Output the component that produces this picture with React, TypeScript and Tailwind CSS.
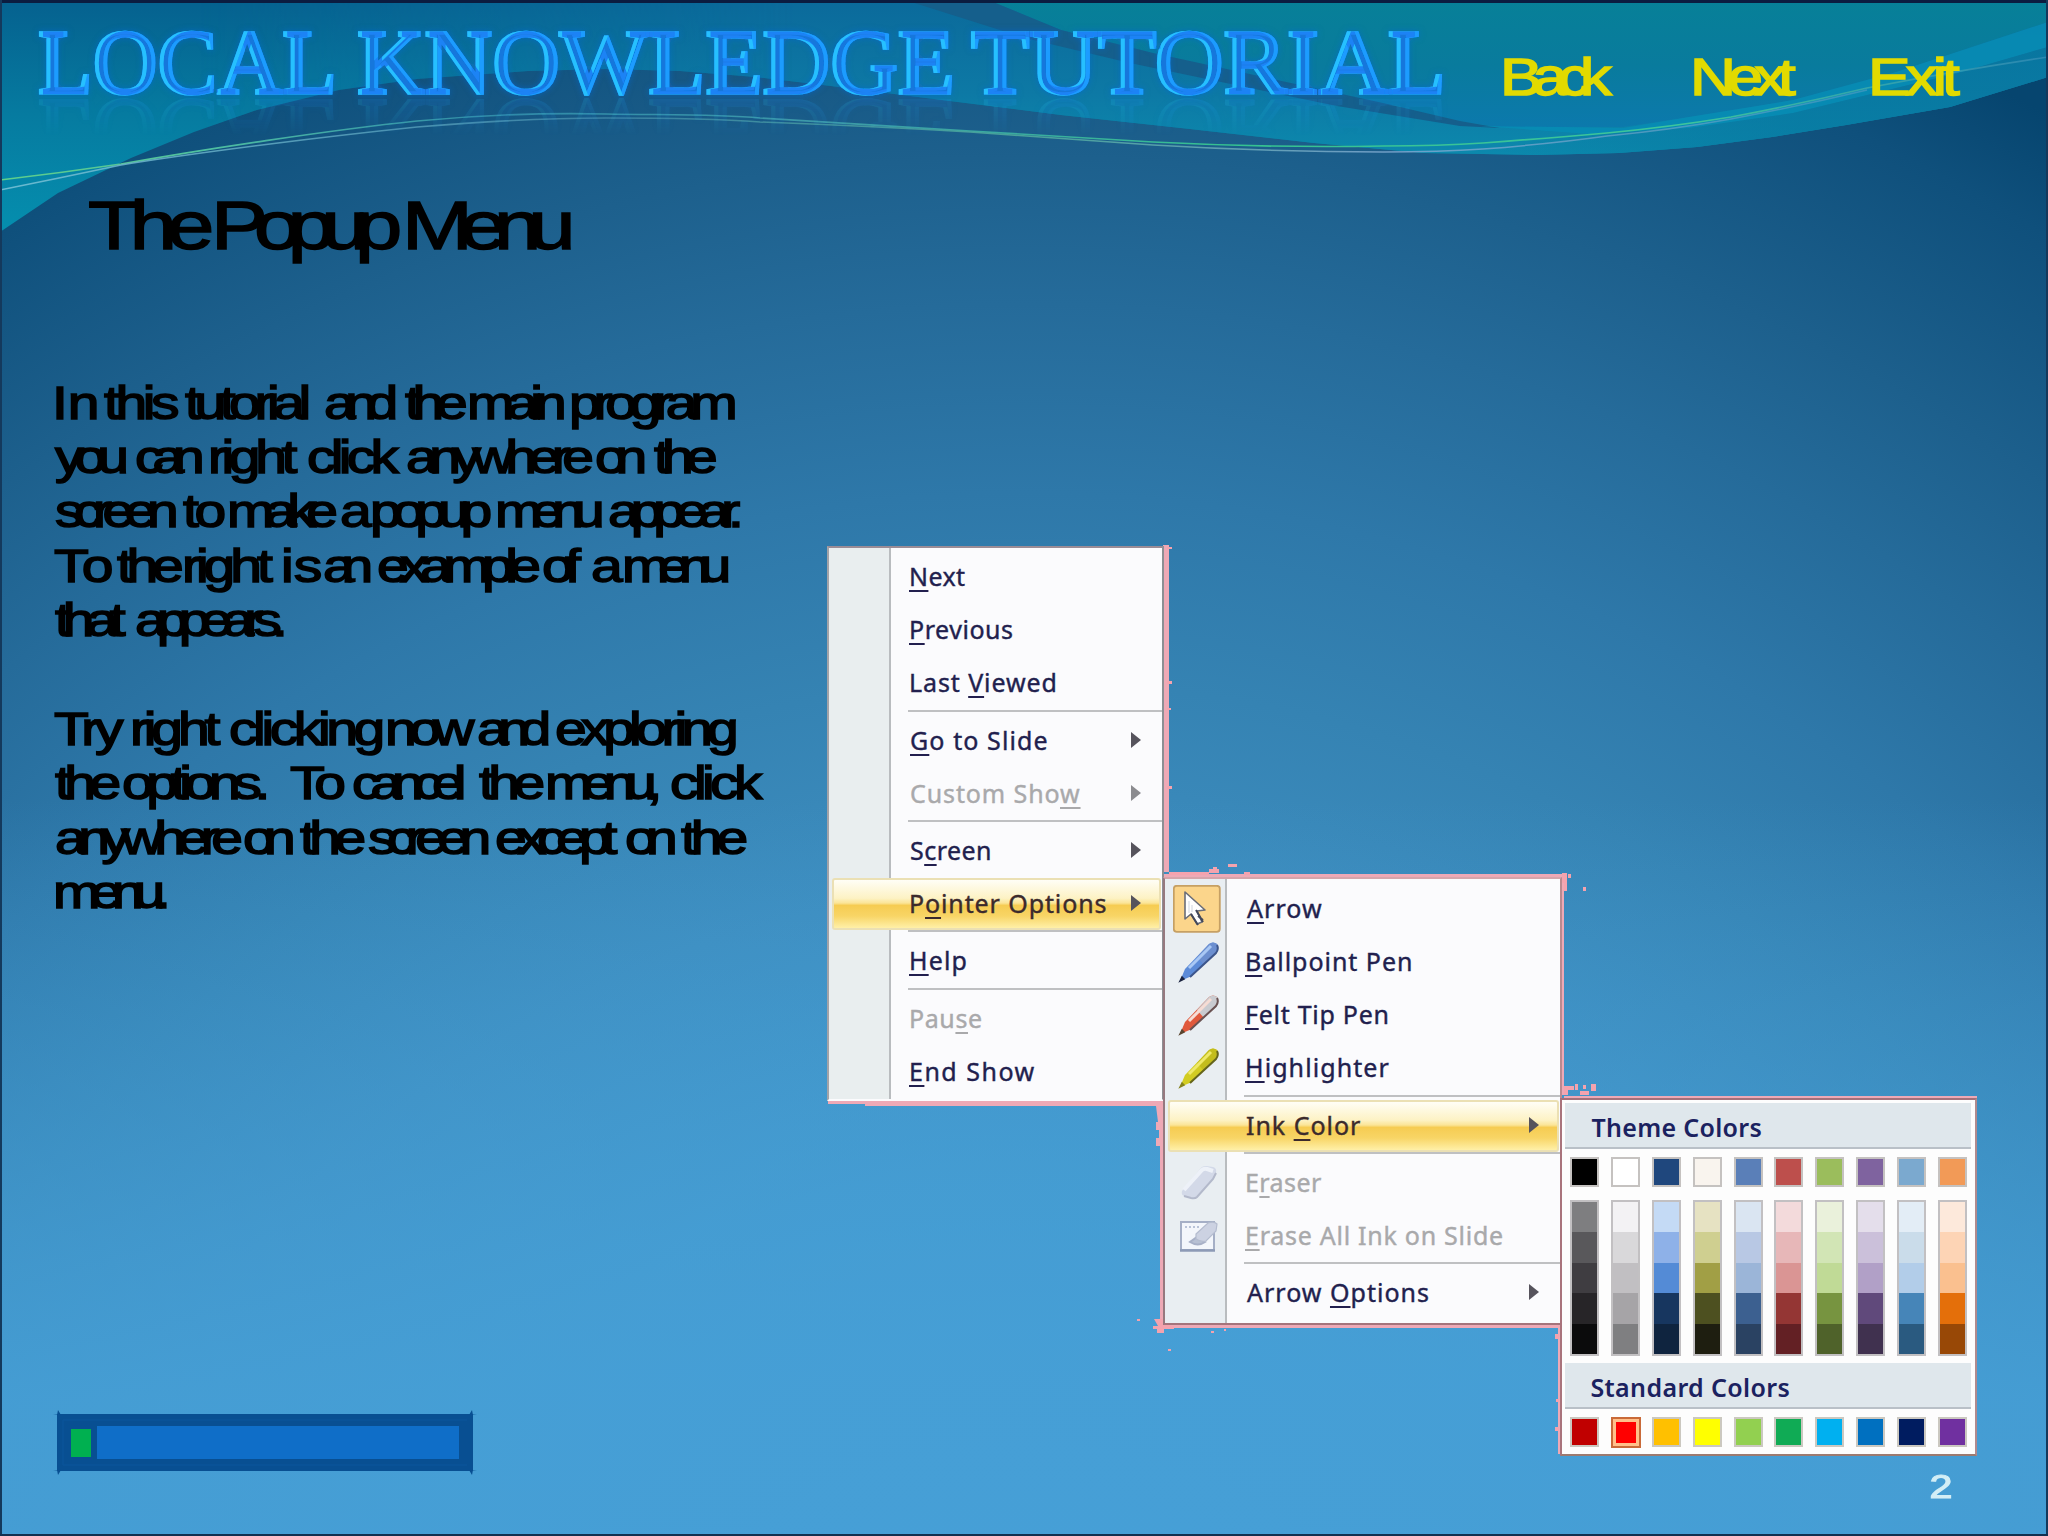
import type { ReactNode } from "react";

type Word = [text: string, start: number, end: number];

type MenuEntry =
  | { type: "separator" }
  | {
      type: "item";
      label: string;
      width: number;
      icon?: ReactNode;
      arrow?: boolean;
      disabled?: boolean;
      active?: boolean;
    };

const ctx = document.createElement("canvas").getContext("2d")!;

// letter spacing that makes the inked part of a text exactly `width` wide
function fit(text: string, font: string, width: number) {
  ctx.font = font;
  const m = ctx.measureText(text);
  const ink = m.actualBoundingBoxLeft + m.actualBoundingBoxRight;
  return {
    spacing: text.length > 1 ? (width - ink) / (text.length - 1) : 0,
    bearing: -m.actualBoundingBoxLeft,
  };
}

const STRETCH = 1.25;

function WideLine({ words, size, left }: { words: Word[]; size: number; left: number }) {
  return (
    <div className="flex whitespace-pre">
      {words.map(([text, start, end], i) => {
        const next = words[i + 1];
        const { spacing, bearing } = fit(text, `${size}px "Liberation Sans"`, (end - start - 1.5) / STRETCH);
        return (
          <span
            key={i}
            className="block shrink-0"
            style={{ width: (next ? next[1] : end) - start, marginLeft: i === 0 ? start - left : 0 }}
          >
            <span
              className="block w-max origin-left scale-x-125"
              style={{ letterSpacing: spacing, marginLeft: 0.75 - bearing * STRETCH }}
            >
              {text}
            </span>
          </span>
        );
      })}
    </div>
  );
}

const title: Word[] = [
  ["The", 88, 211],
  ["Popup", 216, 399],
  ["Menu", 407.5, 571.5],
];

const nav: Word[] = [
  ["Back", 1504, 1613],
  ["Next", 1694, 1796],
  ["Exit", 1872, 1960],
];

const paragraphs: Word[][][] = [
  [
    [["In", 56, 97], ["this", 103.5, 179.5], ["tutorial", 184, 309], ["and", 324.5, 396], ["the", 404.5, 467], ["main", 469.5, 564], ["program", 570.5, 734.5]],
    [["you", 54.5, 127], ["can", 135.5, 202.5], ["right", 211, 298.5], ["click", 307, 399.5], ["anywhere", 406.5, 593], ["on", 595, 644.5], ["the", 653.5, 717]],
    [["screen", 55, 176], ["to", 182, 225], ["make", 230, 337], ["a", 340, 367.5], ["popup", 372, 491.5], ["menu", 497.5, 602], ["appear.", 608.5, 740]],
    [["To", 54.5, 112.5], ["the", 116, 182.5], ["right", 184.5, 273.5], ["is", 283.5, 321.5], ["an", 323, 370.5], ["example", 377.5, 540], ["of", 542, 581.5], ["a", 591, 620.5], ["menu", 624.5, 728.5]],
    [["that", 54.5, 127], ["appears.", 135, 283.5]],
  ],
  [
    [["Try", 54.5, 124.5], ["right", 133, 221.5], ["clicking", 229.5, 383], ["now", 388, 476.5], ["and", 477.5, 549], ["exploring", 555, 736]],
    [["the", 54.5, 120.5], ["options.", 122.5, 266.5], ["To", 290, 344.5], ["cancel", 352, 464], ["the", 478.5, 544.5], ["menu,", 547.5, 658], ["click", 670, 763]],
    [["anywhere", 55, 241.5], ["on", 243.5, 293.5], ["the", 299.5, 365.5], ["screen", 368, 488.5], ["except", 495, 618], ["on", 625, 675], ["the", 680.5, 747.5]],
    [["menu.", 56, 167]],
  ],
];

const sep: MenuEntry = { type: "separator" };

const ArrowIcon = () => (
  <svg width="48" height="48" viewBox="0 0 48 48">
    <rect x="0.8" y="0.8" width="46" height="46" rx="3" fill="#fbd58b" stroke="#c6a064" strokeWidth="1.8" />
    <path d="M12 7v27l6-5 6 10 5-2-5-11 8-1z" fill="#fff" stroke="#6a6d78" strokeWidth="1.6" strokeLinejoin="round" />
    <path d="M23 25l7 12M18 29l7 11M25 31l5 4" stroke="#43485a" strokeWidth="2" />
    <path d="M16 16v12M19 20v7" stroke="#dfe3ea" strokeWidth="1.5" />
  </svg>
);

function PenIcon({ body, cap, light, edge, tip }: { body: string; cap: string; light: string; edge: string; tip: string }) {
  return (
    <svg width="44" height="44" viewBox="0 0 44 44" className="ml-1">
      <path d="M3 41l5-12L32 4q4-3 8 0 2 4-1 8L15 36z" fill={body} />
      <path d="M20 17L32 4q4-3 8 0 2 4-1 8L27 25z" fill={cap} />
      <path d="M12 28L34 6" stroke={light} strokeWidth="3" />
      <path d="M13 37l26-24q3-4 1-8" fill="none" stroke={edge} strokeWidth="2" />
      <path d="M3 41l2-4 2 2z" fill={tip} stroke={tip} strokeWidth="1.5" />
    </svg>
  );
}

const EraserIcon = () => (
  <svg width="44" height="44" viewBox="0 0 44 44" className="ml-1">
    <path d="M5 30L23 8q2-3 6-3l7 1q4 1 3 6l-3 6-16 18q-2 2-6 1l-7-2q-3-1-2-5z" fill="#d3d9e8" />
    <path d="M7 29L25 9q2-2 5-1l6 2" fill="none" stroke="#edf1f8" strokeWidth="4" />
    <path d="M39 12l-3 6-16 18q-2 2-6 1l-7-2" fill="none" stroke="#b3b9cb" strokeWidth="2" />
  </svg>
);

const EraseAllIcon = () => (
  <svg width="44" height="44" viewBox="0 0 44 44" className="ml-1">
    <rect x="4" y="8" width="33" height="28" fill="#f3f6fb" stroke="#a5afc6" strokeWidth="2" />
    <path d="M3 36.5h35" stroke="#8d9ab6" strokeWidth="2.5" />
    <path d="M8 13h16" stroke="#b9c3d8" strokeWidth="2" strokeDasharray="2 2" />
    <path d="M13 28q8 5 15 0l-8-5z" fill="#b7c0d3" stroke="#a7b0c7" strokeWidth="2" />
    <path d="M19 20l12-11q6-2 9 1l-1 7-10 10q-6 1-10-2z" fill="#ccd2e2" stroke="#b4bccf" strokeWidth="1.2" />
  </svg>
);

const mainMenu: MenuEntry[] = [
  { type: "item", label: "&Next", width: 54 },
  { type: "item", label: "&Previous", width: 101 },
  { type: "item", label: "Last &Viewed", width: 144.5 },
  sep,
  { type: "item", label: "&Go to Slide", width: 135.5, arrow: true },
  { type: "item", label: "Custom Sho&w", width: 169, arrow: true, disabled: true },
  sep,
  { type: "item", label: "S&creen", width: 79, arrow: true },
  { type: "item", label: "P&ointer Options", width: 194.5, arrow: true, active: true },
  sep,
  { type: "item", label: "&Help", width: 54.5 },
  sep,
  { type: "item", label: "Pau&se", width: 70, disabled: true },
  { type: "item", label: "&End Show", width: 123.5 },
];

const pointerMenu: MenuEntry[] = [
  { type: "item", label: "&Arrow", width: 75, icon: <ArrowIcon /> },
  {
    type: "item",
    label: "&Ballpoint Pen",
    width: 164,
    icon: <PenIcon body="#5c8bd8" cap="#6c8fd0" light="#a9c8f5" edge="#3d568c" tip="#1b2440" />,
  },
  {
    type: "item",
    label: "&Felt Tip Pen",
    width: 140.5,
    icon: <PenIcon body="#e0593c" cap="#c9cbd0" light="#f6dcd4" edge="#6a5252" tip="#5a4630" />,
  },
  {
    type: "item",
    label: "&Highlighter",
    width: 141.5,
    icon: <PenIcon body="#d2cc22" cap="#c3bd1c" light="#efe96a" edge="#65651c" tip="#85821c" />,
  },
  sep,
  { type: "item", label: "Ink &Color", width: 113, arrow: true, active: true },
  sep,
  { type: "item", label: "E&raser", width: 74, icon: <EraserIcon />, disabled: true },
  { type: "item", label: "&Erase All Ink on Slide", width: 255, icon: <EraseAllIcon />, disabled: true },
  sep,
  { type: "item", label: "Arrow &Options", width: 181, arrow: true },
];

function MenuLabel({ label, width }: { label: string; width: number }) {
  const [before, after] = label.split("&");
  const { spacing, bearing } = fit(before + after, '25px "Noto Sans"', width);
  return (
    <span className="whitespace-pre" style={{ letterSpacing: spacing, marginLeft: -bearing }}>
      {before}
      <u className="decoration-2 underline-offset-4">{after[0]}</u>
      {after.slice(1)}
    </span>
  );
}

function Menu({ entries }: { entries: MenuEntry[] }) {
  return (
    <div>
      {entries.map((entry, i) => {
        if (entry.type === "separator") {
          return (
            <div key={i} className="flex h-[4.6px]">
              <div className="ml-[79px] h-[2px] flex-1 bg-[#bfc0c2]" />
            </div>
          );
        }
        const color = entry.disabled ? "text-[#a9a9ab]" : entry.active ? "text-[#3b2a2c]" : "text-[#221f4e]";
        return (
          <div key={i} className="flex h-[52.9px] items-center pl-[3px] pr-px">
            <div
              className={`flex h-[52px] flex-1 items-center rounded-[3px] border-2 ${
                entry.active
                  ? "border-[#ebe0b4] bg-linear-[180deg,#fffef6_0%,#fdf2c4_38%,#fbe597_48%,#f6cc52_53%,#f8d566_75%,#fff0a8_100%]"
                  : "border-transparent"
              }`}
            >
              <div className="flex w-[77px] shrink-0 items-center pl-[3px]">{entry.icon}</div>
              <div className={`flex flex-1 pb-[2px] text-[25px] leading-[46px] [-webkit-text-stroke:0.4px] ${color}`}>
                <MenuLabel label={entry.label} width={entry.width} />
              </div>
              {entry.arrow && (
                <svg width="10" height="16" viewBox="0 0 10 16" className="mr-[18px] mb-0.5">
                  <path d="M0 0l10 8-10 8z" fill={entry.disabled ? "#8b8b8f" : "#56535c"} />
                </svg>
              )}
            </div>
          </div>
        );
      })}
    </div>
  );
}

const themeColors = ["#000000", "#ffffff", "#1f477d", "#f9f4ee", "#5a7fb8", "#bd4f4c", "#9bbd5c", "#7f639f", "#7ba9cf", "#f29a57"];

const themeShades = [
  ["#7e7e80", "#59585b", "#3f3d41", "#272528", "#0b0b0c"],
  ["#f3f2f4", "#d9d8da", "#c1bfc2", "#a6a4a7", "#7f7f81"],
  ["#c4daf5", "#8eb1e8", "#548bd6", "#17365f", "#0f243f"],
  ["#e6e2c2", "#cfcf90", "#a19f45", "#4d5020", "#1e1e10"],
  ["#dae5f2", "#b8c8e4", "#9bb5d8", "#3c6090", "#2a4262"],
  ["#f3dadb", "#e7b7b8", "#da9594", "#943634", "#632024"],
  ["#eaf1db", "#d2e5b5", "#c0da96", "#779440", "#4f622a"],
  ["#e4deeb", "#cbc0da", "#b1a0c7", "#60497b", "#40314f"],
  ["#e3edf6", "#cadcea", "#b2cde9", "#4685b8", "#2a5a80"],
  ["#fde9db", "#fdd4b5", "#fac08f", "#e46f0a", "#984806"],
];

const standardColors = ["#c00000", "#ff0000", "#ffc000", "#ffff00", "#92d050", "#10ab55", "#00b0f0", "#0070c0", "#001c60", "#7030a0"];

function PaletteHeading({ text, width }: { text: string; width: number }) {
  const { spacing, bearing } = fit(text, '600 25px "Noto Sans"', width);
  return (
    <h3 className="ml-[3px] mr-1 h-[46px] border-b-2 border-[#b9c0c7] bg-[#dfe7ec] pl-[26.5px] text-[25px] leading-[48px] font-semibold whitespace-pre text-[#1b2260]">
      <span style={{ letterSpacing: spacing, marginLeft: -bearing }}>{text}</span>
    </h3>
  );
}

function Palette() {
  return (
    <div>
      <PaletteHeading text="Theme Colors" width={170} />
      <div className="mt-[8px] flex gap-[11.9px] pl-[8px]">
        {themeColors.map((color) => (
          <div key={color} className="h-[30px] w-[29px] border-2 border-[#c5c2c0]" style={{ backgroundColor: color }} />
        ))}
      </div>
      <div className="mt-[13px] flex gap-[11.9px] pl-[8px]">
        {themeShades.map((shades, i) => (
          <div key={i} className="flex h-[156px] w-[29px] flex-col border-2 border-[#c2c0c2]">
            {shades.map((shade) => (
              <div key={shade} className="flex-1" style={{ backgroundColor: shade }} />
            ))}
          </div>
        ))}
      </div>
      <div className="mt-[7px]">
        <PaletteHeading text="Standard Colors" width={198} />
      </div>
      <div className="mt-[8px] flex gap-[11.9px] pl-[8px]">
        {standardColors.map((color, i) => (
          <div
            key={color}
            className={
              i === 1
                ? "-mr-px h-[31px] w-[30px] border-2 border-[#c96a38]"
                : "h-[30px] w-[29px] border-2 border-[#cbc8c0]"
            }
            style={{ backgroundColor: color }}
          >
            {i === 1 && <div className="h-full border-3 border-[#ffc08a]" />}
          </div>
        ))}
      </div>
    </div>
  );
}

const WAVE =
  "M0 0V232L58 193L131 158L194 132L257 110L339 90L417 79L528 71L606 69L680 71L756 77L823 85L942 100L1061 115L1190 129L1314 143L1424 153L1536 155L1619 153L1697 147L1772 137L1846 125L1950 107L2048 77V0Z";

function Backdrop() {
  return (
    <svg className="absolute inset-0" width="2048" height="1536" viewBox="0 0 2048 1536">
      <defs>
        <radialGradient id="base" gradientUnits="userSpaceOnUse" cx="1024" cy="1900" r="2100">
          <stop offset="0.17" stopColor="#46a0d8" />
          <stop offset="0.35" stopColor="#4298cc" />
          <stop offset="0.48" stopColor="#3d8dbf" />
          <stop offset="0.58" stopColor="#3583b3" />
          <stop offset="0.67" stopColor="#2e78a9" />
          <stop offset="0.76" stopColor="#256b9a" />
          <stop offset="0.83" stopColor="#1d608d" />
          <stop offset="0.93" stopColor="#0f507c" />
          <stop offset="0.98" stopColor="#06456f" />
        </radialGradient>
        <linearGradient id="floor" gradientUnits="userSpaceOnUse" x1="0" y1="800" x2="0" y2="1400">
          <stop offset="0" stopColor="#469fd6" stopOpacity="0" />
          <stop offset="1" stopColor="#469fd6" stopOpacity="0.9" />
        </linearGradient>
        <linearGradient id="wave" gradientUnits="userSpaceOnUse" x1="0" y1="0" x2="0" y2="230">
          <stop offset="0" stopColor="#05618f" />
          <stop offset="0.5" stopColor="#067ba0" />
          <stop offset="1" stopColor="#058eae" />
        </linearGradient>
        <linearGradient id="waveMid" gradientUnits="userSpaceOnUse" x1="0" y1="0" x2="0" y2="155">
          <stop offset="0" stopColor="#0b6a9b" />
          <stop offset="0.6" stopColor="#0d79a5" />
          <stop offset="1" stopColor="#0c89ad" />
        </linearGradient>
        <linearGradient id="fade" gradientUnits="userSpaceOnUse" x1="200" y1="0" x2="800" y2="0">
          <stop offset="0" stopColor="#fff" stopOpacity="0" />
          <stop offset="1" stopColor="#fff" />
        </linearGradient>
        <mask id="midMask">
          <rect width="2048" height="300" fill="url(#fade)" />
        </mask>
        <linearGradient id="crest" gradientUnits="userSpaceOnUse" x1="0" y1="0" x2="0" y2="130">
          <stop offset="0" stopColor="#078098" />
          <stop offset="0.5" stopColor="#097b9d" />
          <stop offset="1" stopColor="#0c79ad" />
        </linearGradient>
        <linearGradient id="swell" gradientUnits="userSpaceOnUse" x1="1480" y1="0" x2="1800" y2="0">
          <stop offset="0" stopColor="#0679a0" stopOpacity="0" />
          <stop offset="1" stopColor="#0679a0" stopOpacity="0.6" />
        </linearGradient>
        <linearGradient id="lines" gradientUnits="userSpaceOnUse" x1="0" y1="0" x2="2048" y2="0">
          <stop offset="0" stopColor="#5fd08a" />
          <stop offset="0.1" stopColor="#4fc0a0" />
          <stop offset="0.25" stopColor="#3ba0b8" stopOpacity="0.7" />
          <stop offset="0.4" stopColor="#45a8b0" stopOpacity="0.8" />
          <stop offset="0.6" stopColor="#35c290" />
          <stop offset="0.82" stopColor="#3cc69c" />
          <stop offset="1" stopColor="#3a8fb8" stopOpacity="0.7" />
        </linearGradient>
        <linearGradient id="paleLines" gradientUnits="userSpaceOnUse" x1="0" y1="0" x2="2048" y2="0">
          <stop offset="0" stopColor="#7cc4d8" />
          <stop offset="0.3" stopColor="#3f88a8" />
          <stop offset="0.5" stopColor="#4fae9c" />
          <stop offset="0.68" stopColor="#7fa8d0" />
          <stop offset="1" stopColor="#4f9cc0" stopOpacity="0.5" />
        </linearGradient>
      </defs>
      <rect width="2048" height="1536" fill="url(#base)" />
      <rect y="800" width="2048" height="736" fill="url(#floor)" />
      <path d={WAVE} fill="url(#wave)" />
      <path d={WAVE} fill="url(#waveMid)" mask="url(#midMask)" />
      <path d="M988 0L1061 30L1153 53L1268 78L1383 103L1460 121L1497 127H1623L1689 117L1793 100L1896 72L2048 22V0Z" fill="url(#crest)" />
      <path d="M905 0H988L1061 30L1153 53L1268 78L1383 103L1460 121L1500 128L1460 126L1337 106L1245 87L1130 63L1025 38Z" fill="#155f8c" />
      <path d="M1480 126L1623 128L1689 117L1793 100L1896 72L2048 22V47L1958 73L1793 113L1689 128L1590 134Z" fill="#078db5" opacity="0.85" />
      <path d="M2048 47L1958 73L1793 113L1689 128L1590 134L1480 150L1536 155L1619 153L1697 147L1772 137L1846 125L1950 107L2048 77Z" fill="url(#swell)" />
      <g fill="none">
        <path d="M0 180Q60 173 121 164C200 150 330 130 417 121C500 113 560 113 606 114C670 115 720 114 760 118C840 123 900 127 970 131L1153 142Q1270 148 1383 146Q1440 146 1483 143Q1550 138 1607 133Q1670 127 1731 117Q1800 104 1867 88Q1960 70 2048 57" stroke="url(#lines)" strokeWidth="1.7" />
        <path d="M0 190Q60 178 121 165C200 152 330 136 417 127C500 120 560 118 606 118C670 118 720 119 760 122C840 125 900 128 970 132L1153 145Q1270 152 1383 152Q1440 152 1483 149Q1550 144 1607 136Q1670 130 1731 119Q1800 106 1867 90" stroke="url(#paleLines)" strokeWidth="1.5" opacity="0.85" />
      </g>
      <path d="M0 1.5H2048" stroke="#0b1c40" strokeWidth="3" />
      <path d="M1 0V1536M2047 0V1536" stroke="#14395c" strokeWidth="2" />
      <path d="M0 1535H2048" stroke="#123050" strokeWidth="2" />
    </svg>
  );
}

const banner: Word[] = [
  ["LOCAL", 38, 337],
  ["KNOWLEDGE", 357, 955],
  ["TUTORIAL", 971, 1446],
];

// bevelled lettering: dark core, blue rim, cyan light from the left
function Banner() {
  return (
    <svg
      width="1460"
      height="106"
      viewBox="0 0 1460 106"
      className="overflow-visible font-['Liberation_Serif',serif] text-[92px] [-webkit-box-reflect:below_-18px_linear-gradient(transparent_55%,rgba(255,255,255,0.22))]"
    >
      <defs>
        <filter id="bevel" x="-2%" y="-20%" width="104%" height="140%">
          <feGaussianBlur in="SourceAlpha" stdDeviation="3" result="soft" />
          <feFlood floodColor="#1568d8" floodOpacity="0.6" />
          <feComposite in2="soft" operator="in" result="glow" />
          <feOffset in="SourceAlpha" dx="4" dy="0" result="right" />
          <feComposite in="SourceAlpha" in2="right" operator="out" result="leftEdge" />
          <feFlood floodColor="#27c0ff" />
          <feComposite in2="leftEdge" operator="in" result="leftLight" />
          <feOffset in="SourceAlpha" dx="-4" dy="0" result="left" />
          <feComposite in="SourceAlpha" in2="left" operator="out" result="rightEdge" />
          <feFlood floodColor="#1f9cff" />
          <feComposite in2="rightEdge" operator="in" result="rightLight" />
          <feMerge result="letters">
            <feMergeNode in="SourceGraphic" />
            <feMergeNode in="rightLight" />
            <feMergeNode in="leftLight" />
          </feMerge>
          <feGaussianBlur in="letters" stdDeviation="0.7" result="smooth" />
          <feMerge>
            <feMergeNode in="glow" />
            <feMergeNode in="smooth" />
          </feMerge>
        </filter>
      </defs>
      <g fill="#1277dc" stroke="#1f83f5" strokeWidth="3.4" filter="url(#bevel)">
        {banner.map(([text, start, end]) => (
          <text key={text} x={start} y="93" textLength={end - start} lengthAdjust="spacingAndGlyphs">
            {text}
          </text>
        ))}
      </g>
    </svg>
  );
}

function Progress() {
  return (
    <div className="relative flex h-[57px] w-[416px] items-center gap-[6px] bg-[#084f92] px-[14px]">
      <svg className="absolute -top-1 -left-1" width="424" height="65" viewBox="0 0 424 65">
        <path
          d="M0 4l4 1 1-5 3 5zM424 4l-4 1-1-5-3 5zM0 61l4-1 1 5 3-5zM424 61l-4-1-1 5-3-5z"
          fill="#084f92"
        />
        <path d="M10 10H414M10 55H414M10 10V55" stroke="#0a5499" strokeWidth="1.5" />
      </svg>
      <div className="relative h-7 w-5 bg-[#00b050]" />
      <div className="relative h-[33px] w-[363px] bg-[#0f6ec8]" />
    </div>
  );
}

// leftover pixels of the pink matte round the pasted menus
function Fringe() {
  return (
    <svg className="absolute inset-0" width="2048" height="1536" viewBox="0 0 2048 1536">
      <path
        d="M1163 545h6v327h-6zM865 1101h298v5h-298zM828 1101h37v3h-37zM1163 874h401v3h-401zM1560 877h4v218h-4zM1156 1106h7v220h-3v-180h-4v-8h3v-8h-3v-8h2zM1162 1325h398v3h-398zM1564 1096h413v2h-413zM1558 1328h3v126h-3z"
        fill="#eea9b6"
      />
      <path
        d="M1167 547h5v2h-5zM1167 681h5v3h-5zM1167 708h4v2h-4zM1167 786h5v3h-5zM1169 872h40v3h-40zM1209 869h10v4h-10zM1213 867h4v4h-4zM1228 864h9v3h-9zM1244 872h6v3h-6zM1562 873h5v18h-3v-8h-2zM1568 874h3v4h-3zM1583 887h3v4h-3zM1564 1086h10v4h-6v5h-4zM1575 1084h3v6h-3zM1580 1091h9v4h-9zM1583 1085h3v4h-3zM1591 1084h5v7h-5zM1154 1319h10v3h6v4h4v3h-10v4h-7v-4h-4v-3h5zM1137 1319h3v2h-3zM1211 1331h3v2h-3zM1224 1329h2v2h-2zM1168 1349h3v2h-3zM1555 1334h4v5h-4zM1556 1399h3v3h-3zM1555 1427h4v4h-4z"
        fill="#f4a3ae"
      />
    </svg>
  );
}

export default function App() {
  return (
    <div className="relative h-[1536px] w-[2048px] overflow-hidden font-['Liberation_Sans',Arial,sans-serif]">
      <Backdrop />

      <div className="relative flex h-full flex-col text-black">
        <header className="flex h-[185px]">
          <h1 className="w-[1460px] shrink-0">
            <Banner />
          </h1>
          <nav className="mt-[48px] text-[51px] leading-[60px] text-[#e2da00] [-webkit-text-stroke:1.5px_#e2da00]">
            <WideLine words={nav} size={51} left={1460} />
          </nav>
        </header>

        <h2 className="text-[68px] leading-[80px] [-webkit-text-stroke:1.5px_#000]">
          <WideLine words={title} size={68} left={0} />
        </h2>

        <main className="mt-[111.5px] flex-1 text-[45.6px] leading-[54.4px] [-webkit-text-stroke:1.5px_#000]">
          {paragraphs.map((lines, i) => (
            <div key={i} className="mb-[54.4px]">
              {lines.map((words, j) => (
                <WideLine key={j} words={words} size={45.6} left={0} />
              ))}
            </div>
          ))}
        </main>

        <footer className="flex h-[122px] justify-between pr-[96px] pl-[57px]">
          <Progress />
          <span className="mt-[53px] origin-right scale-x-125 text-[33px] leading-[40px] text-[#d3eef6] [-webkit-text-stroke:1.2px_#d3eef6]">
            2
          </span>
        </footer>
      </div>

      <Fringe />
      <div className="absolute top-[546px] left-[827px] h-[555px] w-[337px] border-2 border-t-[#9a8c96] border-r-[#8d8f94] border-b-[#fbfbfd] border-l-[#a3a3a8] bg-[linear-gradient(90deg,#e9eeef_60px,#b9bcbf_60px,#b9bcbf_62px,#fbfbfd_62px)] pt-[3px] font-['Noto_Sans',sans-serif]">
        <Menu entries={mainMenu} />
      </div>
      <div className="absolute top-[877px] left-[1163px] h-[448px] w-[399px] border-2 border-t-[#d5a5ab] border-r-[#b98a90] border-b-[#a5747c] border-l-[#96797f] bg-[linear-gradient(90deg,#e9eef2_60px,#b9bcbf_60px,#b9bcbf_62px,#fbfbfd_62px)] pt-1 font-['Noto_Sans',sans-serif]">
        <Menu entries={pointerMenu} />
      </div>
      <div className="absolute top-[1098px] left-[1560px] h-[358px] w-[417px] border-2 border-t-[#a3707a] border-r-[#b08a8e] border-b-[#9c7a70] border-l-[#a9747c] bg-[#fdfdfd] pt-[3px] font-['Noto_Sans',sans-serif]">
        <Palette />
      </div>
    </div>
  );
}
